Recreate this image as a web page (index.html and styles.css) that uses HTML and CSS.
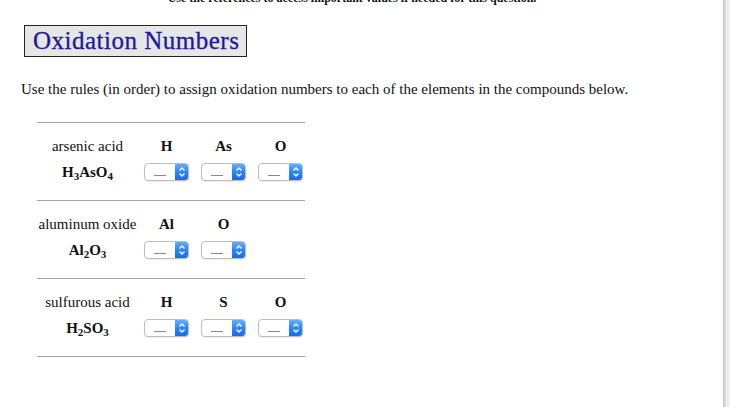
FILE: index.html
```html
<!DOCTYPE html>
<html lang="en">
<head>
  <meta charset="UTF-8">
  <title>Oxidation Numbers</title>
  <link rel="stylesheet" href="styles.css">
</head>
<body>
  <div class="page">
    <p class="note">Use the references to access important values if needed for this question.</p>

    <div class="title-box">Oxidation Numbers</div>

    <p class="intro">Use the rules (in order) to assign oxidation numbers to each of the elements in the compounds below.</p>

    <div class="compounds">
      <div class="compound">
        <div class="name">arsenic acid</div>
        <div class="el">H</div>
        <div class="el">As</div>
        <div class="el">O</div>
        <div class="formula">H<sub>3</sub>AsO<sub>4</sub></div>
        <div class="cell"><span class="pick"><span class="pick-val"><span class="blank"></span></span><span class="pick-btn"><svg viewBox="0 0 14 18" width="14" height="18"><path d="M4.5 7.5 L7 5 L9.5 7.5 M4.5 10.5 L7 13 L9.5 10.5" fill="none" stroke="#fff" stroke-width="1.4"/></svg></span></span></div>
        <div class="cell"><span class="pick"><span class="pick-val"><span class="blank"></span></span><span class="pick-btn"><svg viewBox="0 0 14 18" width="14" height="18"><path d="M4.5 7.5 L7 5 L9.5 7.5 M4.5 10.5 L7 13 L9.5 10.5" fill="none" stroke="#fff" stroke-width="1.4"/></svg></span></span></div>
        <div class="cell"><span class="pick"><span class="pick-val"><span class="blank"></span></span><span class="pick-btn"><svg viewBox="0 0 14 18" width="14" height="18"><path d="M4.5 7.5 L7 5 L9.5 7.5 M4.5 10.5 L7 13 L9.5 10.5" fill="none" stroke="#fff" stroke-width="1.4"/></svg></span></span></div>
      </div>

      <div class="compound">
        <div class="name">aluminum oxide</div>
        <div class="el">Al</div>
        <div class="el">O</div>
        <div class="el"></div>
        <div class="formula">Al<sub>2</sub>O<sub>3</sub></div>
        <div class="cell"><span class="pick"><span class="pick-val"><span class="blank"></span></span><span class="pick-btn"><svg viewBox="0 0 14 18" width="14" height="18"><path d="M4.5 7.5 L7 5 L9.5 7.5 M4.5 10.5 L7 13 L9.5 10.5" fill="none" stroke="#fff" stroke-width="1.4"/></svg></span></span></div>
        <div class="cell"><span class="pick"><span class="pick-val"><span class="blank"></span></span><span class="pick-btn"><svg viewBox="0 0 14 18" width="14" height="18"><path d="M4.5 7.5 L7 5 L9.5 7.5 M4.5 10.5 L7 13 L9.5 10.5" fill="none" stroke="#fff" stroke-width="1.4"/></svg></span></span></div>
        <div class="cell"></div>
      </div>

      <div class="compound">
        <div class="name">sulfurous acid</div>
        <div class="el">H</div>
        <div class="el">S</div>
        <div class="el">O</div>
        <div class="formula">H<sub>2</sub>SO<sub>3</sub></div>
        <div class="cell"><span class="pick"><span class="pick-val"><span class="blank"></span></span><span class="pick-btn"><svg viewBox="0 0 14 18" width="14" height="18"><path d="M4.5 7.5 L7 5 L9.5 7.5 M4.5 10.5 L7 13 L9.5 10.5" fill="none" stroke="#fff" stroke-width="1.4"/></svg></span></span></div>
        <div class="cell"><span class="pick"><span class="pick-val"><span class="blank"></span></span><span class="pick-btn"><svg viewBox="0 0 14 18" width="14" height="18"><path d="M4.5 7.5 L7 5 L9.5 7.5 M4.5 10.5 L7 13 L9.5 10.5" fill="none" stroke="#fff" stroke-width="1.4"/></svg></span></span></div>
        <div class="cell"><span class="pick"><span class="pick-val"><span class="blank"></span></span><span class="pick-btn"><svg viewBox="0 0 14 18" width="14" height="18"><path d="M4.5 7.5 L7 5 L9.5 7.5 M4.5 10.5 L7 13 L9.5 10.5" fill="none" stroke="#fff" stroke-width="1.4"/></svg></span></span></div>
      </div>
    </div>
  </div>
  <div class="edge"></div>
</body>
</html>
```

FILE: styles.css
```css
html, body {
  height: 100%;
}
body {
  margin: 0;
  display: flex;
  font-family: 'Liberation Serif', 'Times New Roman', serif;
  color: #111;
  background: white;
  overflow: hidden;
}
.page {
  width: 723px;
  padding-left: 21px;
  box-sizing: border-box;
}
.edge {
  width: 7px;
  background: linear-gradient(to right, #c6c6c6 0, #d6d6d6 2px, #ececec 3px, #f2f2f2 100%);
}
.note {
  margin: -9px 0 0 -21px;
  padding-right: 19px;
  font-size: 12px;
  line-height: 14px;
  font-weight: bold;
  text-align: center;
}
.title-box {
  display: inline-block;
  margin: 20px 0 0 3px;
  padding: 0 7px 0 8px;
  border: 1px solid #222;
  background: #e6e6e6;
  color: #1a1a9e;
  font-size: 25px;
  line-height: 30px;
  letter-spacing: 0.5px;
  -webkit-text-stroke: 0.3px #1a1a9e;
}
.intro {
  margin: 24px 0 0 0;
  font-size: 15px;
  line-height: 16px;
}
.compounds {
  margin: 25px 0 0 16px;
  width: 268px;
  border-bottom: 1px solid #a4a4a4;
}
.compound {
  display: grid;
  grid-template-columns: 101px repeat(3, 57px);
  grid-template-rows: 18px 18px;
  row-gap: 8px;
  align-items: center;
  justify-items: center;
  padding: 14px 0 19px 0;
  border-top: 1px solid #a4a4a4;
  width: 268px;
  font-size: 15px;
}
.name {
  white-space: nowrap;
}
.el, .formula {
  font-weight: bold;
}
.formula sub {
  font-size: 11px;
  vertical-align: -3px;
  line-height: 0;
}
.pick {
  display: flex;
  width: 45px;
  height: 18px;
  box-sizing: border-box;
  border: 1px solid #bdbdbd;
  border-radius: 4px;
  overflow: hidden;
  background: white;
  box-shadow: 0 1px 1px rgba(0,0,0,0.08);
}
.pick-val {
  flex: 1;
  display: flex;
  justify-content: center;
  align-items: flex-end;
  padding-bottom: 4px;
}
.blank {
  width: 12px;
  height: 1px;
  background: #8a8a8a;
}
.pick-btn {
  width: 14px;
  margin: -1px -1px -1px 0;
  background: linear-gradient(to bottom, #6cb3ff 0%, #2a86fb 50%, #1466f2 100%);
  display: flex;
  align-items: center;
  justify-content: center;
}
.pick-btn svg {
  display: block;
}
```
